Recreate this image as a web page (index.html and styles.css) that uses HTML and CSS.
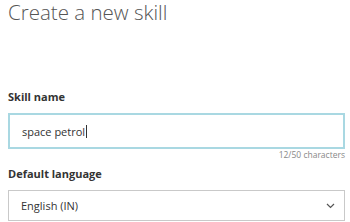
FILE: index.html
```html
<!DOCTYPE html>
<html lang="en">
<head>
    <meta charset="UTF-8">
    <meta name="viewport" content="width=device-width, initial-scale=1.0">
    <title>Create a new skill</title>
    <link rel="stylesheet" href="styles.css">
</head>
<body>
    <div class="page">
        <h1 class="title">Create a new skill</h1>
        <div class="field">
            <label class="label">Skill name</label>
            <div class="input focus">space petrol<span class="caret"></span></div>
            <div class="hint">12/50 characters</div>
        </div>
        <div class="field">
            <label class="label">Default language</label>
            <div class="input select">
                <span>English (IN)</span>
                <svg width="9" height="6" viewBox="0 0 9 6"><path d="M1 1 L4.5 4.5 L8 1" fill="none" stroke="#555" stroke-width="1.2"/></svg>
            </div>
        </div>
    </div>
</body>
</html>
```
FILE: styles.css
```css
*{
    margin: 0px;
    padding: 0px;
    box-sizing: border-box;
}
body{
    font-family: "Open Sans", "DejaVu Sans", sans-serif;
    background: #fff;
    color: #232f3e;
}
.page{
    padding: 0px 5px 0px 8px;
}
.title{
    font-size: 20.5px;
    font-weight: 300;
    color: #555;
    line-height: 24px;
    height: 90px;
}
.field{
    display: flex;
    flex-direction: column;
}
.label{
    font-size: 11px;
    font-weight: 700;
    color: #333;
    line-height: 14px;
    margin-bottom: 9px;
}
.input{
    height: 36px;
    border: 1px solid #c9c9c9;
    font-size: 11px;
    color: #333;
    display: flex;
    align-items: center;
    padding: 0px 12px;
}
.focus{
    border: 2px solid #a9d8e2;
}
.caret{
    display: inline-block;
    width: 1px;
    height: 13px;
    background: #333;
    margin-left: 1px;
}
.hint{
    font-size: 8.5px;
    color: #888;
    text-align: right;
    line-height: 12px;
    margin-bottom: 6px;
}
.select{
    justify-content: space-between;
    height: 31px;
    padding-right: 9px;
}
```
